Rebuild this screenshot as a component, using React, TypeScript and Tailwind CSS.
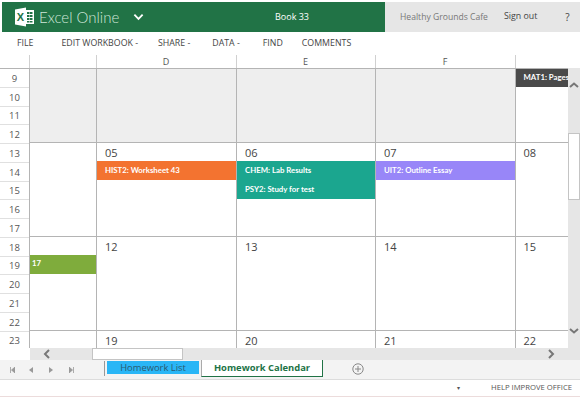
import React from "react";

const font = "font-['Open_Sans','Noto_Sans',sans-serif]";

function Day({ n, shaded, children }: { n?: string; shaded?: boolean; children?: React.ReactNode }) {
  return (
    <div className={`border-r border-[#b4b4b4] min-w-0 overflow-hidden ${shaded ? "bg-[#eeeeee]" : "bg-white"}`}>
      {n && <div className="h-[18px] pl-[8.5px] text-[11px] leading-[20px] text-[#444]">{n}</div>}
      {children}
    </div>
  );
}

function Ev({ c, children }: { c: string; children: React.ReactNode }) {
  return (
    <div className={`${c} h-[19px] flex items-center pl-[8.5px] font-['Lato',sans-serif] text-[7.8px] font-bold text-white whitespace-nowrap overflow-hidden`}>
      {children}
    </div>
  );
}

const weekCols = "grid grid-cols-[66.5px_140px_139px_140px_52.5px] border-b border-[#b4b4b4]";

export default function App() {
  const rows = [9, 10, 11, 12, 13, 14, 15, 16, 17, 18, 19, 20, 21, 22, 23];
  return (
    <div className={`${font} w-[580px] h-[400px] bg-white overflow-hidden flex flex-col`}>
      <div className="h-[2px] mt-0 bg-white" />
      {/* title bar */}
      <div className="h-[30px] flex shrink-0 pl-[2px]">
        <div className="w-[383px] bg-[#217346] flex items-center text-white relative">
          <svg width="20" height="20" viewBox="0 0 20 20" className="ml-[13px]">
            <rect x="8" y="3" width="11" height="14" fill="#ffffff" />
            <g fill="#217346">
              <rect x="12" y="5" width="2.5" height="2" />
              <rect x="15" y="5" width="2.5" height="2" />
              <rect x="12" y="8" width="2.5" height="2" />
              <rect x="15" y="8" width="2.5" height="2" />
              <rect x="12" y="11" width="2.5" height="2" />
              <rect x="15" y="11" width="2.5" height="2" />
              <rect x="12" y="14" width="2.5" height="1.5" />
              <rect x="15" y="14" width="2.5" height="1.5" />
            </g>
            <polygon points="0,2.5 11,0.5 11,19.5 0,17.5" fill="#ffffff" />
            <text x="5.5" y="14" textAnchor="middle" fontSize="11" fontWeight="700" fill="#217346" fontFamily="Liberation Sans">X</text>
          </svg>
          <span className="ml-[4px] font-['Lato',sans-serif] text-[15px] font-light text-[#cfe6d8] leading-none">Excel Online</span>
          <svg width="11" height="8" viewBox="0 0 12 8" className="ml-[14px]">
            <path d="M1.5 1.5 L6 6 L10.5 1.5" fill="none" stroke="#ffffff" strokeWidth="2" />
          </svg>
          <span className="absolute left-[273px] text-[9px] text-white">Book 33</span>
        </div>
        <div className="flex-1 bg-[#e6e6e6] flex items-center text-[8.8px]">
          <span className="ml-[15px] text-[8.6px] text-[#777]">Healthy Grounds Cafe</span>
          <span className="ml-[16px] text-[#444]">Sign out</span>
          <span className="ml-[28px] text-[#444] text-[10px]">?</span>
        </div>
      </div>
      {/* menu */}
      <div className="h-[23px] shrink-0 flex items-center text-[8.8px] text-[#444]">
        <span className="ml-[17px]">FILE</span>
        <span className="ml-[28px]">EDIT WORKBOOK -</span>
        <span className="ml-[20px]">SHARE -</span>
        <span className="ml-[22px]">DATA -</span>
        <span className="ml-[23px]">FIND</span>
        <span className="ml-[19px]">COMMENTS</span>
      </div>
      {/* sheet */}
      <div className="h-[293px] shrink-0 flex">
        <div className="w-[568px] flex flex-col overflow-hidden">
          <div className="h-[14px] shrink-0 flex border-b border-[#b4b4b4] text-[9px] text-[#555] leading-[13px]">
            <div className="w-[30px] border-r border-[#d0d0d0]" />
            <div className="w-[66.5px] border-r border-[#d0d0d0]" />
            <div className="w-[140px] text-center border-r border-[#d0d0d0]">D</div>
            <div className="w-[139px] text-center border-r border-[#d0d0d0]">E</div>
            <div className="w-[140px] text-center border-r border-[#d0d0d0]">F</div>
          </div>
          <div className="flex-1 flex min-h-0 overflow-hidden">
            <div className="w-[30px] shrink-0 border-r border-[#b4b4b4] bg-white">
              {rows.map((r) => (
                <div key={r} className="h-[18.75px] pt-[2px] flex items-center justify-center border-b border-[#e0e0e0] text-[9.5px] text-[#555]">
                  {r}
                </div>
              ))}
            </div>
            <div className="w-[538px]">
              <div className={`${weekCols} h-[74px]`}>
                <Day shaded />
                <Day shaded />
                <Day shaded />
                <Day shaded />
                <div className="min-w-0 overflow-hidden">
                  <div className="h-[18px] bg-[#4a4a4a] pl-[8px] flex items-center font-['Lato',sans-serif] text-[7.8px] font-bold text-white whitespace-nowrap">MAT1: Pages</div>
                </div>
              </div>
              <div className={`${weekCols} h-[93.75px]`}>
                <Day />
                <Day n="05">
                  <Ev c="bg-[#f37330]">HIST2: Worksheet 43</Ev>
                </Day>
                <Day n="06">
                  <Ev c="bg-[#1ba68f]">CHEM: Lab Results</Ev>
                  <Ev c="bg-[#1ba68f]">PSY2: Study for test</Ev>
                </Day>
                <Day n="07">
                  <Ev c="bg-[#9886f8]">UIT2: Outline Essay</Ev>
                </Day>
                <div className="h-[18px] pl-[8px] text-[11px] leading-[20px] text-[#444]">08</div>
              </div>
              <div className={`${weekCols} h-[93.75px]`}>
                <Day>
                  <div className="h-[18px]" />
                  <Ev c="bg-[#7fac3c] !pl-[2px]">17</Ev>
                </Day>
                <Day n="12" />
                <Day n="13" />
                <Day n="14" />
                <div className="h-[18px] pl-[8px] text-[11px] leading-[20px] text-[#444]">15</div>
              </div>
              <div className="grid grid-cols-[66.5px_140px_139px_140px_52.5px] h-[19px]">
                <Day />
                <Day n="19" />
                <Day n="20" />
                <Day n="21" />
                <div className="h-[18px] pl-[8px] text-[11px] leading-[20px] text-[#444]">22</div>
              </div>
            </div>
          </div>
        </div>
        {/* vertical scrollbar */}
        <div className="w-[12px] flex flex-col items-center">
          <div className="h-[13px] w-full bg-white shrink-0" />
          <div className="flex-1 w-full bg-[#e6e6e6] flex flex-col items-center">
            <svg width="10" height="6" viewBox="0 0 10 6" className="mt-[14px]"><path d="M1 5 L5 1.5 L9 5" fill="none" stroke="#777" strokeWidth="2" /></svg>
            <div className="mt-[45px] h-[67px] w-full bg-white border border-[#c4c4c4]" />
            <svg width="10" height="6" viewBox="0 0 10 6" className="mt-auto mb-[14px]"><path d="M1 1 L5 4.5 L9 1" fill="none" stroke="#777" strokeWidth="2" /></svg>
          </div>
        </div>
      </div>
      {/* horizontal scrollbar */}
      <div className="h-[12px] shrink-0 bg-[#e6e6e6] flex items-center ml-[30px]">
        <svg width="8" height="10" viewBox="0 0 8 10" className="ml-[13px]"><path d="M6 1 L2 5 L6 9" fill="none" stroke="#777" strokeWidth="2" /></svg>
        <div className="ml-[41px] w-[91px] h-[12px] bg-white border border-[#c4c4c4]" />
        <svg width="8" height="10" viewBox="0 0 8 10" className="ml-auto mr-[25px]"><path d="M2 1 L6 5 L2 9" fill="none" stroke="#777" strokeWidth="2" /></svg>
      </div>
      {/* tabs */}
      <div className="h-[20px] shrink-0 bg-[#f3f3f3] border-b border-[#dcdcdc] flex items-start">
        <div className="w-[104px] h-[19px] flex items-center pl-[10px] gap-[14px] shrink-0">
          <svg width="5" height="6" viewBox="0 0 5 6"><path d="M0.5 0 V6 M5 0 V6 L1.5 3 Z" stroke="#999" strokeWidth="0.8" fill="#999" /></svg>
          <svg width="4" height="6" viewBox="0 0 4 6"><path d="M4 0 V6 L0 3 Z" fill="#999" /></svg>
          <svg width="4" height="6" viewBox="0 0 4 6" className="ml-[2px]"><path d="M0 0 V6 L4 3 Z" fill="#999" /></svg>
          <svg width="5" height="6" viewBox="0 0 5 6" className="ml-[2px]"><path d="M4.5 0 V6 M0 0 V6 L3.5 3 Z" stroke="#999" strokeWidth="0.8" fill="#999" /></svg>
        </div>
        <div className="h-[15px] mt-[1px] pl-[2px] border-l border-[#999]">
          <div className="w-[92px] h-[13px] bg-[#29b6f6] text-center text-[9.4px] leading-[13px] text-[#2a5a70]">Homework List</div>
        </div>
        <div className="w-[122px] h-[17px] ml-[2px] bg-white text-center text-[9.4px] font-bold leading-[15px] text-[#217346] border-b border-r border-l border-[#217346] border-l-[#aaa]">Homework Calendar</div>
        <svg width="12" height="12" viewBox="0 0 12 12" className="ml-[29px] mt-[3px]">
          <circle cx="6" cy="6" r="5.2" fill="none" stroke="#888" />
          <path d="M6 3 V9 M3 6 H9" stroke="#888" />
        </svg>
      </div>
      {/* status */}
      <div className="h-[17px] shrink-0 border-b border-[#ecdcdc] flex items-center justify-end text-[7.7px] text-[#555]">
        <span className="mr-[31px] text-[6px]">▾</span>
        <span className="mr-[8px]">HELP IMPROVE OFFICE</span>
      </div>
    </div>
  );
}
